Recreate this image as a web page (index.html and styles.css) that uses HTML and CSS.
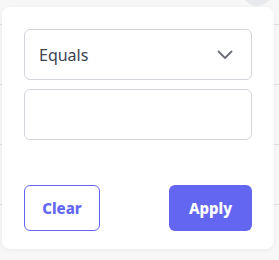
FILE: index.html
```html
<!DOCTYPE html>
<html lang="en">
<head>
<meta charset="UTF-8">
<title>Filter</title>
<link rel="stylesheet" href="styles.css">
</head>
<body>
<div class="backdrop">
  <div class="row-line"></div>
  <div class="row-line"></div>
  <div class="row-line"></div>
  <div class="row-line"></div>
</div>
<div class="avatar"></div>
<div class="popover">
  <div class="select">
    <span>Equals</span>
    <svg width="16" height="10" viewBox="0 0 16 10"><path d="M1.5 1.5 L8 8 L14.5 1.5" fill="none" stroke="#6b6f76" stroke-width="1.8" stroke-linecap="round" stroke-linejoin="round"/></svg>
  </div>
  <input type="text" class="value">
  <div class="actions">
    <button class="btn btn-clear">Clear</button>
    <button class="btn btn-apply">Apply</button>
  </div>
</div>
</body>
</html>
```

FILE: styles.css
```css
body {
  margin: 0;
  width: 279px;
  height: 260px;
  background: #f7f7f8;
  font-family: "Noto Sans", "Open Sans", sans-serif;
  position: relative;
  overflow: hidden;
}
.backdrop {
  padding-top: 24px;
}
.row-line {
  height: 59px;
  border-top: 1px solid #dedede;
}
.avatar {
  position: absolute;
  top: -24px;
  left: 242px;
  width: 30px;
  height: 30px;
  border-radius: 50%;
  background: #e8e9ec;
}
.popover {
  position: absolute;
  top: 7px;
  left: 2px;
  width: 272px;
  height: 242px;
  box-sizing: border-box;
  padding: 22px 22px 18px;
  background: #fff;
  border-radius: 8px;
  box-shadow: 0 1px 4px rgba(0,0,0,0.06);
  display: flex;
  flex-direction: column;
}
.select {
  height: 51px;
  box-sizing: border-box;
  border: 1px solid #d3d5da;
  border-radius: 6px;
  display: flex;
  align-items: center;
  justify-content: space-between;
  padding: 0 18px 0 14px;
  font-size: 16px;
  color: #3b4250;
}
.select svg {
  display: block;
}
.value {
  margin: 9px 0 0;
  height: 51px;
  box-sizing: border-box;
  border: 1px solid #d3d5da;
  border-radius: 6px;
  width: 100%;
  font: inherit;
}
.actions {
  margin-top: auto;
  display: flex;
  justify-content: space-between;
}
.btn {
  height: 46px;
  box-sizing: border-box;
  border-radius: 6px;
  font-family: "Noto Sans", sans-serif;
  font-weight: 800;
  font-size: 15px;
  cursor: pointer;
}
.btn-clear {
  width: 76px;
  background: #fff;
  color: #6366f1;
  border: 1px solid #6366f1;
}
.btn-apply {
  width: 83px;
  background: #6366f1;
  color: #fff;
  border: none;
}
```
